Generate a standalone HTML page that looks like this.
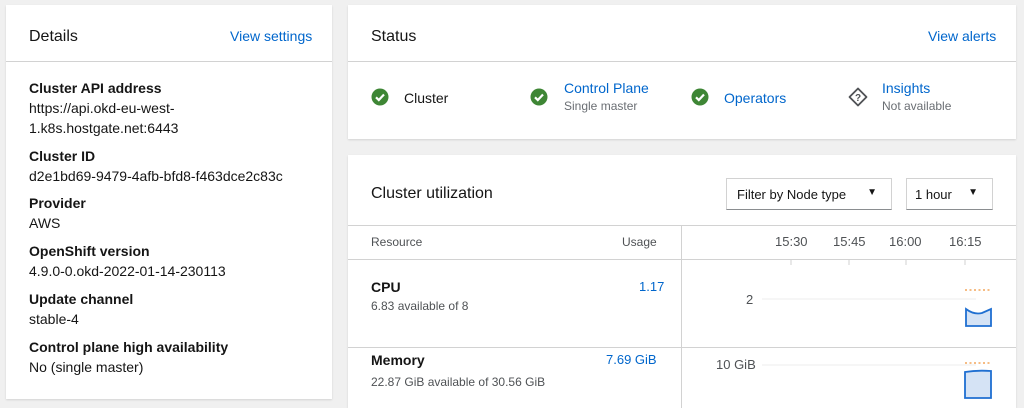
<!DOCTYPE html><html><head><style>
*{margin:0;padding:0;box-sizing:border-box}
html{overflow:hidden;width:1024px;height:408px}
body{width:1024px;height:408px;background:#f0f0f0;font-family:"Liberation Sans",sans-serif;color:#151515;position:relative;overflow:hidden;font-size:14px}
.card{position:absolute;background:#fff;box-shadow:0 1px 2px rgba(0,0,0,.12)}
.a{position:absolute;white-space:nowrap}
.b{color:#0066cc}
.h{font-size:16px}
.lab{font-weight:bold;font-size:14px}
.sm{font-size:12px;color:#6a6e73}
.hr{position:absolute;height:1px;background:#d2d2d2}
</style></head><body>
<div class="card" style="left:6px;top:5px;width:326px;height:394px">
<div class="a h" style="left:23px;top:23px">Details</div>
<div class="a b" style="left:224px;top:23px">View settings</div>
<div class="hr" style="left:0;top:56px;width:326px"></div>
<div class="a lab" style="left:23px;top:75px">Cluster API address</div>
<div class="a" style="left:23px;top:95px">https://api.okd-eu-west-</div>
<div class="a" style="left:23px;top:115px">1.k8s.hostgate.net:6443</div>
<div class="a lab" style="left:23px;top:143px">Cluster ID</div>
<div class="a" style="left:23px;top:163px">d2e1bd69-9479-4afb-bfd8-f463dce2c83c</div>
<div class="a lab" style="left:23px;top:190px">Provider</div>
<div class="a" style="left:23px;top:210px">AWS</div>
<div class="a lab" style="left:23px;top:238px">OpenShift version</div>
<div class="a" style="left:23px;top:258px">4.9.0-0.okd-2022-01-14-230113</div>
<div class="a lab" style="left:23px;top:286px">Update channel</div>
<div class="a" style="left:23px;top:306px">stable-4</div>
<div class="a lab" style="left:23px;top:334px">Control plane high availability</div>
<div class="a" style="left:23px;top:354px">No (single master)</div>
</div>

<div class="card" style="left:348px;top:5px;width:668px;height:134px">
<div class="a h" style="left:23px;top:23px">Status</div>
<div class="a b" style="left:580px;top:23px">View alerts</div>
<div class="hr" style="left:0;top:56px;width:668px"></div>
<svg class="a" style="left:23px;top:83px" width="18" height="18"><circle cx="9" cy="9" r="8.5" fill="#3e8635"/><path d="M5 9.3l2.8 2.7L13 6.5" stroke="#fff" stroke-width="2.2" fill="none"/></svg>
<div class="a" style="left:56px;top:85px">Cluster</div>
<svg class="a" style="left:182px;top:83px" width="18" height="18"><circle cx="9" cy="9" r="8.5" fill="#3e8635"/><path d="M5 9.3l2.8 2.7L13 6.5" stroke="#fff" stroke-width="2.2" fill="none"/></svg>
<div class="a b" style="left:216px;top:75px">Control Plane</div>
<div class="a sm" style="left:216px;top:94px">Single master</div>
<svg class="a" style="left:343px;top:83px" width="18" height="18"><circle cx="9" cy="9" r="8.5" fill="#3e8635"/><path d="M5 9.3l2.8 2.7L13 6.5" stroke="#fff" stroke-width="2.2" fill="none"/></svg>
<div class="a b" style="left:376px;top:85px">Operators</div>
<svg class="a" style="left:500px;top:82px" width="20" height="20"><path d="M10 1.5L18.5 10 10 18.5 1.5 10z" stroke="#4f5255" stroke-width="1.8" fill="none" stroke-linejoin="round"/><text x="10" y="14" font-size="10" font-weight="bold" text-anchor="middle" fill="#4f5255" font-family="Liberation Sans">?</text></svg>
<div class="a b" style="left:534px;top:75px">Insights</div>
<div class="a sm" style="left:534px;top:94px">Not available</div>
</div>

<div class="card" style="left:348px;top:155px;width:668px;height:253px">
<div class="a h" style="left:23px;top:30px">Cluster utilization</div>
<div class="a" style="left:378px;top:23px;width:166px;height:32px;border:1px solid #d2d2d2;border-bottom-color:#8a8d90;padding:8px 10px;font-size:13px">Filter by Node type<span style="position:absolute;right:14px;top:8px;font-size:10px">▼</span></div>
<div class="a" style="left:558px;top:23px;width:87px;height:32px;border:1px solid #d2d2d2;border-bottom-color:#8a8d90;padding:8px 8px;font-size:13px">1 hour<span style="position:absolute;right:14px;top:8px;font-size:10px">▼</span></div>
<div class="hr" style="left:0;top:70px;width:668px"></div>
<div class="a" style="left:333px;top:70px;width:1px;height:200px;background:#d2d2d2"></div>
<div class="a sm" style="left:23px;top:80px;color:#4f5255">Resource</div>
<div class="a sm" style="left:274px;top:80px;color:#4f5255">Usage</div>
<div class="a sm" style="left:427px;top:79px;font-size:13px;color:#4f5255">15:30</div>
<div class="a sm" style="left:485px;top:79px;font-size:13px;color:#4f5255">15:45</div>
<div class="a sm" style="left:541px;top:79px;font-size:13px;color:#4f5255">16:00</div>
<div class="a sm" style="left:601px;top:79px;font-size:13px;color:#4f5255">16:15</div>
<div class="hr" style="left:0;top:104px;width:668px"></div>
<div class="hr" style="left:0;top:192px;width:668px"></div>
<div class="a" style="left:23px;top:124px;font-weight:bold">CPU</div>
<div class="a sm" style="left:23px;top:144px;color:#4f5255">6.83 available of 8</div>
<div class="a b" style="left:291px;top:124px;font-size:13px">1.17</div>
<div class="a" style="left:23px;top:197px;font-weight:bold">Memory</div>
<div class="a sm" style="left:23px;top:220px;color:#4f5255">22.87 GiB available of 30.56 GiB</div>
<div class="a b" style="left:258px;top:197px;font-size:13px">7.69 GiB</div>
<div class="a sm" style="left:398px;top:137px;font-size:13px;color:#4f5255">2</div>
<div class="a sm" style="left:368px;top:202px;font-size:13px;color:#4f5255">10 GiB</div>
<svg class="a" style="left:334px;top:100px" width="334" height="160">
<g stroke="#d2d2d2"><line x1="109" y1="4" x2="109" y2="10"/><line x1="167" y1="4" x2="167" y2="10"/><line x1="224" y1="4" x2="224" y2="10"/><line x1="283" y1="4" x2="283" y2="10"/>
<line x1="80" y1="44" x2="294" y2="44" stroke="#ececec"/><line x1="80" y1="110" x2="294" y2="110" stroke="#ececec"/></g>
<line x1="283" y1="35" x2="308" y2="35" stroke="#ec7a08" stroke-dasharray="2,2.5"/>
<line x1="283" y1="108" x2="308" y2="108" stroke="#ec7a08" stroke-dasharray="2,2.5"/>
<path d="M284 54 Q292 60 300 58 L309 54 L309 71 L284 71Z" fill="#d5e3f5" stroke="#1f6fd1" stroke-width="1.8"/>
<path d="M283 117 Q295 115 309 116 L309 143 L283 143Z" fill="#d5e3f5" stroke="#1f6fd1" stroke-width="1.8"/>
</svg>
</div>
</body></html>
